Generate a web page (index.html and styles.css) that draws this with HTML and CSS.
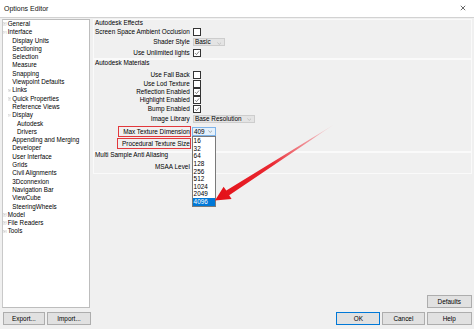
FILE: index.html
```html
<!DOCTYPE html>
<html>
<head>
<meta charset="utf-8">
<link rel="stylesheet" href="styles.css">
</head>
<body>
<div class="window">
  <div class="titlebar">
    <span class="title">Options Editor</span>
    <svg class="close" viewBox="0 0 6 6"><path d="M0.8 0.8L5.2 5.2M5.2 0.8L0.8 5.2" stroke="#444" stroke-width="0.8"/></svg>
  </div>
  <div class="main">
    <div class="tree">
      <div class="node l0"><svg class="ex" viewBox="0 0 5 5"><rect x=".5" y=".5" width="4" height="4" fill="none" stroke="#c4c4c4" stroke-width=".5"/><path d="M1.4 2.5h2.2M2.5 1.4v2.2" stroke="#9a9a9a" stroke-width=".5"/></svg>General</div>
      <div class="node l0"><svg class="ex" viewBox="0 0 5 5"><rect x=".5" y=".5" width="4" height="4" fill="none" stroke="#c4c4c4" stroke-width=".5"/><path d="M1.4 2.5h2.2" stroke="#9a9a9a" stroke-width=".5"/></svg>Interface</div>
      <div class="node l1"><span class="ex"></span>Display Units</div>
      <div class="node l1"><span class="ex"></span>Sectioning</div>
      <div class="node l1"><span class="ex"></span>Selection</div>
      <div class="node l1"><span class="ex"></span>Measure</div>
      <div class="node l1"><span class="ex"></span>Snapping</div>
      <div class="node l1"><span class="ex"></span>Viewpoint Defaults</div>
      <div class="node l1"><svg class="ex" viewBox="0 0 5 5"><rect x=".5" y=".5" width="4" height="4" fill="none" stroke="#c4c4c4" stroke-width=".5"/><path d="M1.4 2.5h2.2M2.5 1.4v2.2" stroke="#9a9a9a" stroke-width=".5"/></svg>Links</div>
      <div class="node l1"><svg class="ex" viewBox="0 0 5 5"><rect x=".5" y=".5" width="4" height="4" fill="none" stroke="#c4c4c4" stroke-width=".5"/><path d="M1.4 2.5h2.2M2.5 1.4v2.2" stroke="#9a9a9a" stroke-width=".5"/></svg>Quick Properties</div>
      <div class="node l1"><span class="ex"></span>Reference Views</div>
      <div class="node l1"><svg class="ex" viewBox="0 0 5 5"><rect x=".5" y=".5" width="4" height="4" fill="none" stroke="#c4c4c4" stroke-width=".5"/><path d="M1.4 2.5h2.2" stroke="#9a9a9a" stroke-width=".5"/></svg>Display</div>
      <div class="node l2"><span class="ex"></span>Autodesk</div>
      <div class="node l2"><span class="ex"></span>Drivers</div>
      <div class="node l1"><span class="ex"></span>Appending and Merging</div>
      <div class="node l1"><span class="ex"></span>Developer</div>
      <div class="node l1"><span class="ex"></span>User Interface</div>
      <div class="node l1"><span class="ex"></span>Grids</div>
      <div class="node l1"><span class="ex"></span>Civil Alignments</div>
      <div class="node l1"><span class="ex"></span>3Dconnexion</div>
      <div class="node l1"><span class="ex"></span>Navigation Bar</div>
      <div class="node l1"><span class="ex"></span>ViewCube</div>
      <div class="node l1"><span class="ex"></span>SteeringWheels</div>
      <div class="node l0"><svg class="ex" viewBox="0 0 5 5"><rect x=".5" y=".5" width="4" height="4" fill="none" stroke="#c4c4c4" stroke-width=".5"/><path d="M1.4 2.5h2.2M2.5 1.4v2.2" stroke="#9a9a9a" stroke-width=".5"/></svg>Model</div>
      <div class="node l0"><svg class="ex" viewBox="0 0 5 5"><rect x=".5" y=".5" width="4" height="4" fill="none" stroke="#c4c4c4" stroke-width=".5"/><path d="M1.4 2.5h2.2M2.5 1.4v2.2" stroke="#9a9a9a" stroke-width=".5"/></svg>File Readers</div>
      <div class="node l0"><svg class="ex" viewBox="0 0 5 5"><rect x=".5" y=".5" width="4" height="4" fill="none" stroke="#c4c4c4" stroke-width=".5"/><path d="M1.4 2.5h2.2M2.5 1.4v2.2" stroke="#9a9a9a" stroke-width=".5"/></svg>Tools</div>
    </div>

    <div class="panel">
      <div class="group g1">
        <div class="ghead">Autodesk Effects</div>
        <div class="row h8"><span class="lbl">Screen Space Ambient Occlusion</span><span class="chk"></span></div>
        <div class="row h12"><span class="lbl">Shader Style</span><span class="combo w-shader">Basic<svg class="chev" viewBox="0 0 6 4"><path d="M0.5 0.8L3 3.2L5.5 0.8" fill="none" stroke="#9a9a9a" stroke-width="0.6"/></svg></span></div>
        <div class="row h8"><span class="lbl">Use Unlimited lights</span><span class="chk"><svg viewBox="0 0 6 6"><path d="M1 3.1L2.5 4.6L5.1 1.4" fill="none" stroke="#333" stroke-width="0.6"/></svg></span></div>
      </div>

      <div class="group g2">
        <div class="ghead gap-lg">Autodesk Materials</div>
        <div class="row h8"><span class="lbl">Use Fall Back</span><span class="chk"></span></div>
        <div class="row h8"><span class="lbl">Use Lod Texture</span><span class="chk"></span></div>
        <div class="row h8"><span class="lbl">Reflection Enabled</span><span class="chk"><svg viewBox="0 0 6 6"><path d="M1 3.1L2.5 4.6L5.1 1.4" fill="none" stroke="#333" stroke-width="0.6"/></svg></span></div>
        <div class="row h8"><span class="lbl">Highlight Enabled</span><span class="chk"><svg viewBox="0 0 6 6"><path d="M1 3.1L2.5 4.6L5.1 1.4" fill="none" stroke="#333" stroke-width="0.6"/></svg></span></div>
        <div class="row h8"><span class="lbl">Bump Enabled</span><span class="chk"><svg viewBox="0 0 6 6"><path d="M1 3.1L2.5 4.6L5.1 1.4" fill="none" stroke="#333" stroke-width="0.6"/></svg></span></div>
        <div class="row h126"><span class="lbl">Image Library</span><span class="combo w-lib">Base Resolution<svg class="chev" viewBox="0 0 6 4"><path d="M0.5 0.8L3 3.2L5.5 0.8" fill="none" stroke="#9a9a9a" stroke-width="0.6"/></svg></span></div>
        <div class="row h12"><span class="lbl"><span class="boxed">Max Texture Dimension</span></span><span class="combo focus">409<svg class="chev" viewBox="0 0 6 4"><path d="M0.5 0.8L3 3.2L5.5 0.8" fill="none" stroke="#555" stroke-width="0.6"/></svg></span></div>
        <div class="row h12"><span class="lbl"><span class="boxed">Procedural Texture Size</span></span><span></span></div>
      </div>

      <div class="group g3">
        <div class="ghead">Multi Sample Anti Aliasing</div>
        <div class="row h12"><span class="lbl">MSAA Level</span><span></span></div>
      </div>

      <div class="defaults-row"><button class="btn w-help">Defaults</button></div>
    </div>
  </div>

  <div class="footer">
    <div class="left-btns">
      <button class="btn w-export">Export...</button>
      <button class="btn w-import">Import...</button>
    </div>
    <div class="right-btns">
      <button class="btn w-ok default">OK</button>
      <button class="btn w-cancel">Cancel</button>
      <button class="btn w-help">Help</button>
    </div>
  </div>

  <div class="dropdown">
    <div class="opt">16</div>
    <div class="opt">32</div>
    <div class="opt">64</div>
    <div class="opt">128</div>
    <div class="opt">256</div>
    <div class="opt">512</div>
    <div class="opt">1024</div>
    <div class="opt">2049</div>
    <div class="opt sel">4096</div>
  </div>

  <svg class="arrow" viewBox="0 0 474 329">
    <defs>
      <linearGradient id="ag" gradientUnits="userSpaceOnUse" x1="222" y1="196" x2="334" y2="124">
        <stop offset="0" stop-color="#e4121a"/>
        <stop offset="0.45" stop-color="#ea2a33"/>
        <stop offset="0.8" stop-color="#f07880" stop-opacity="0.7"/>
        <stop offset="1" stop-color="#f6c0c6" stop-opacity="0.3"/>
      </linearGradient>
    </defs>
    <polygon points="215,200.5 223.6,186.8 226.3,190.6 334,124.5 229.2,195.2 231.6,198.9" fill="url(#ag)"/>
  </svg>
</div>
</body>
</html>
```

FILE: styles.css
```css
* { box-sizing: border-box; }
html, body { margin: 0; padding: 0; }
body {
  width: 474px;
  height: 329px;
  overflow: hidden;
  background: #f0f0f0;
  font-family: "Liberation Sans", Arial, sans-serif;
  font-size: 6.4px;
  color: #000;
}
.window {
  position: relative;
  width: 474px;
  height: 329px;
  display: flex;
  flex-direction: column;
}
.titlebar {
  height: 18px;
  background: #fff;
  border-bottom: 1px solid #d2d2d2;
  display: flex;
  align-items: center;
  justify-content: space-between;
  padding: 0 8px 1px 4px;
}
.title { font-size: 7px; color: #111; }
.close { width: 6px; height: 6px; }

.main {
  height: 290px;
  display: flex;
  padding-left: 2px;
}
.tree {
  width: 88px;
  margin-top: 1px;
  height: 289px;
  background: #fff;
  border: 1px solid #bdbdbd;
  border-left-color: #c9c9c9;
  padding-top: 0;
}
.node {
  height: 8.3px;
  line-height: 8.3px;
  display: flex;
  align-items: center;
  white-space: nowrap;
  font-size: 6.3px;
}
.node.l0 { padding-left: 0.3px; }
.node.l1 { padding-left: 4.9px; }
.node.l2 { padding-left: 9.6px; }
.ex { width: 3.6px; height: 3.6px; flex: none; margin-right: 0.8px; display: block; }

.panel {
  flex: 1;
  display: flex;
  flex-direction: column;
  padding: 0 2px 0 3px;
}
.group {
  border: 1px solid #fafafa;
}
.g1 { margin-top: 1px; padding-bottom: 1.2px; }
.g2 { margin-top: 0.5px; padding-bottom: 1px; }
.g3 { margin-top: 0.5px; }
.ghead {
  height: 6px;
  line-height: 6px;
  padding-left: 1px;
  margin-bottom: 2px;
  white-space: nowrap;
}
.ghead.gap-lg { margin-bottom: 4.5px; }
.g3 .ghead { margin-top: -0.8px; margin-bottom: 2.3px; }
.row {
  display: grid;
  grid-template-columns: 95.8px 1fr;
  column-gap: 3.2px;
  align-items: center;
}
.row.h8 { height: 8.4px; }
.row.h12 { height: 12px; }
.row.h126 { height: 12.6px; }
.lbl { text-align: right; white-space: nowrap; line-height: 8px; }
.boxed {
  display: inline-block;
  border: 1px solid #e2383c;
  padding: 1px 0.6px 1px 4.3px;
  margin-right: -1.6px;
  line-height: 7px;
}
.chk {
  width: 8px;
  height: 8px;
  border: 1px solid #333;
  background: #fff;
  display: block;
}
.chk svg { width: 6px; height: 6px; display: block; }
.combo {
  position: relative;
  height: 8px;
  display: flex;
  align-items: center;
  padding-left: 1px;
  background: #e4e4e4;
  border: 1px solid #cdcdcd;
  white-space: nowrap;
  line-height: 6px;
}
.w-shader { width: 32px; }
.w-lib { width: 62px; }
.combo.focus {
  width: 24px;
  height: 9px;
  margin-left: -1px;
  background: #e5f1fb;
  border-color: #7eb4ea;
}
.chev {
  position: absolute;
  right: 2.5px;
  top: 2.2px;
  width: 4.5px;
  height: 3px;
}

.defaults-row {
  margin-top: auto;
  display: flex;
  justify-content: flex-end;
}
.btn {
  height: 13px;
  padding: 0;
  margin: 0;
  font-family: "Liberation Sans", Arial, sans-serif;
  font-size: 6.4px;
  color: #000;
  background: #e1e1e1;
  border: 1px solid #adadad;
  line-height: 11px;
  text-align: center;
}
.btn.default { border-color: #0078d7; }
.w-export { width: 42px; }
.w-import { width: 44px; }
.w-ok { width: 44px; }
.w-cancel { width: 43px; }
.w-help { width: 45.5px; }

.footer {
  flex: 1;
  display: flex;
  justify-content: space-between;
  align-items: flex-start;
  padding: 3.5px 2px 0 3px;
}
.left-btns, .right-btns { display: flex; gap: 1.6px; }
.left-btns { gap: 2px; }

.dropdown {
  position: absolute;
  left: 192px;
  top: 136px;
  width: 24px;
  background: #fff;
  border: 1px solid #7a7a7a;
  padding-top: 0.3px;
}
.opt {
  height: 7.6px;
  line-height: 7.6px;
  padding-left: 0.6px;
}
.opt.sel { background: #0078d7; color: #fff; }

.arrow {
  position: absolute;
  left: 0;
  top: 0;
  width: 474px;
  height: 329px;
  pointer-events: none;
}
```
